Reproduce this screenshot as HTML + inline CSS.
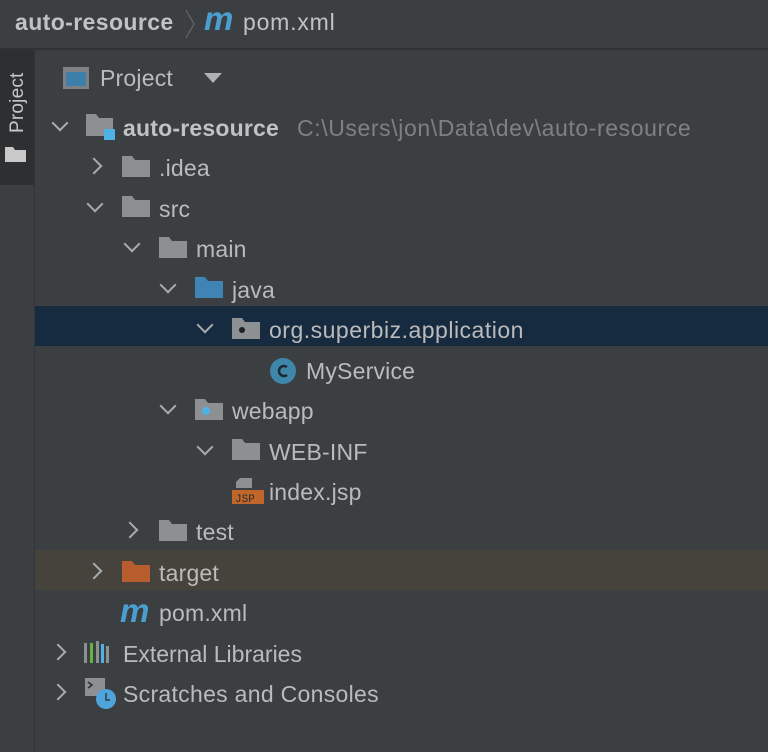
<!DOCTYPE html>
<html><head><meta charset="utf-8"><style>
body{margin:0;width:768px;height:752px;background:#3c3f41;font-family:"Liberation Sans",sans-serif;color:#bbbbbb;overflow:hidden;position:relative}
.top{position:absolute;left:0;top:0;width:768px;height:48px;background:#3c3f41;border-bottom:2px solid #2f3133}
.strip{position:absolute;left:0;top:50px;width:34px;height:702px;background:#3c3f41;border-right:1px solid #323436}
.tab{position:absolute;left:0;top:50px;width:34px;height:135px;background:#2d2f30}
.row{position:absolute;left:35px;width:733px;height:40px}
.t{position:absolute;font-size:23px;white-space:nowrap;line-height:26px;letter-spacing:0.2px}
.ch{position:absolute;width:10px;height:10px;border-right:2px solid #a9acae;border-bottom:2px solid #a9acae}
.dn{transform:rotate(45deg)}
.rt{transform:rotate(-45deg)}
.m{position:absolute;font-size:33px;font-style:italic;font-weight:bold;color:#4b9fd0;line-height:30px;letter-spacing:-1px}
svg{position:absolute}
</style></head><body>
<div class="top"></div>
<div class="t" style="left:15px;top:9px;font-weight:bold;color:#c2c2c2;letter-spacing:0.4px">auto-resource</div>
<svg style="left:183px;top:8px" width="14" height="32"><path d="M3 2 L11 16 L3 30" stroke="#5c5f61" stroke-width="1.5" fill="none"/></svg>
<div class="m" style="left:204px;top:4px">m</div>
<div class="t" style="left:243px;top:9px;color:#c2c2c2;letter-spacing:0.8px">pom.xml</div>
<div class="strip"></div><div class="tab"></div>
<div class="t" style="left:5px;top:133px;transform:rotate(-90deg);transform-origin:0 0;font-size:19px;color:#c8c8c8">Project</div>
<svg style="left:4px;top:145px" width="24" height="18"><path d="M1 2h8l2 3h11v12H1z" fill="#c9c9c9"/></svg>
<div class="row" style="top:306px;background:#172b40"></div>
<div class="row" style="top:550px;background:#45433c"></div>
<svg style="left:62px;top:66px" width="28" height="24"><rect x="1" y="1" width="26" height="22" fill="#7d8183"/><rect x="4" y="6" width="20" height="14" fill="#3d7eaa"/></svg>
<div class="t" style="left:100px;top:65px">Project</div>
<svg style="left:204px;top:73px" width="18" height="12"><path d="M0 0h18L9 10z" fill="#aeb1b3"/></svg>
<div class="ch dn" style="left:54px;top:117px"></div>
<div class="ch rt" style="left:88px;top:160px"></div>
<div class="ch dn" style="left:89px;top:198px"></div>
<div class="ch dn" style="left:126px;top:238px"></div>
<div class="ch dn" style="left:162px;top:279px"></div>
<div class="ch dn" style="left:199px;top:319px"></div>
<div class="ch dn" style="left:162px;top:400px"></div>
<div class="ch dn" style="left:199px;top:441px"></div>
<div class="ch rt" style="left:124px;top:524px"></div>
<div class="ch rt" style="left:88px;top:565px"></div>
<div class="ch rt" style="left:52px;top:646px"></div>
<div class="ch rt" style="left:52px;top:686px"></div>
<svg style="left:86px;top:114px" width="32" height="28"><path d="M0 0h10l3 4h14v18H0z" fill="#8c9092"/><rect x="18" y="15" width="11" height="11" fill="#4fb2e6"/></svg>
<svg style="left:122px;top:156px" width="30" height="22"><path d="M0 0h10l3 4h15v17H0z" fill="#8c9092"/></svg>
<svg style="left:122px;top:196px" width="30" height="22"><path d="M0 0h10l3 4h15v17H0z" fill="#8c9092"/></svg>
<svg style="left:159px;top:237px" width="30" height="22"><path d="M0 0h10l3 4h15v17H0z" fill="#8c9092"/></svg>
<svg style="left:195px;top:277px" width="30" height="22"><path d="M0 0h10l3 4h15v17H0z" fill="#4083b5"/></svg>
<svg style="left:232px;top:318px" width="30" height="22"><path d="M0 0h10l3 4h15v17H0z" fill="#8c9092"/><circle cx="10" cy="12" r="3" fill="#1e1f20"/></svg>
<svg style="left:195px;top:399px" width="30" height="22"><path d="M0 0h10l3 4h15v17H0z" fill="#8c9092"/><circle cx="11" cy="12" r="4" fill="#4fb2e6"/></svg>
<svg style="left:232px;top:439px" width="30" height="22"><path d="M0 0h10l3 4h15v17H0z" fill="#8c9092"/></svg>
<svg style="left:159px;top:520px" width="30" height="22"><path d="M0 0h10l3 4h15v17H0z" fill="#8c9092"/></svg>
<svg style="left:122px;top:561px" width="30" height="22"><path d="M0 0h10l3 4h15v17H0z" fill="#b85d2e"/></svg>
<svg style="left:269px;top:357px" width="28" height="28"><circle cx="14" cy="14" r="13" fill="#3f86ab"/><path d="M18 10a5 5 0 1 0 0 8" stroke="#1e2a33" stroke-width="2.5" fill="none"/></svg>
<svg style="left:232px;top:476px" width="32" height="30"><path d="M8 2h12v10H4V6z" fill="#8c9092"/><rect x="0" y="14" width="32" height="14" fill="#c0662a"/><text x="3" y="26" font-size="11" fill="#2b2b2b" font-family="Liberation Mono">JSP</text></svg>
<div class="m" style="left:120px;top:596px">m</div>
<svg style="left:84px;top:641px" width="26" height="24"><rect x="0" y="2" width="3" height="20" fill="#8c9092"/><rect x="6" y="2" width="3" height="20" fill="#62b543"/><rect x="12" y="0" width="3" height="22" fill="#8c9092"/><rect x="17" y="3" width="3" height="19" fill="#4fb2e6"/><rect x="22" y="5" width="3" height="17" fill="#8c9092"/></svg>
<svg style="left:84px;top:677px" width="36" height="34"><rect x="1" y="1" width="20" height="18" fill="#8c9092"/><path d="M4 5l4 3-4 3" stroke="#2d2f30" stroke-width="1.5" fill="none"/><circle cx="22" cy="22" r="10" fill="#4fa4dc"/><path d="M22 16v7h4" stroke="#2b3a44" stroke-width="1.5" fill="none"/></svg>
<div class="t" style="left:123px;top:115px;font-weight:bold;color:#c2c2c2">auto-resource</div>
<div class="t" style="left:297px;top:115px;color:#808080;letter-spacing:0.6px">C:\Users\jon\Data\dev\auto-resource</div>
<div class="t" style="left:159px;top:155px">.idea</div>
<div class="t" style="left:159px;top:196px">src</div>
<div class="t" style="left:196px;top:236px">main</div>
<div class="t" style="left:232px;top:277px">java</div>
<div class="t" style="left:269px;top:317px;letter-spacing:0.5px">org.superbiz.application</div>
<div class="t" style="left:306px;top:358px">MyService</div>
<div class="t" style="left:232px;top:398px">webapp</div>
<div class="t" style="left:269px;top:439px">WEB-INF</div>
<div class="t" style="left:269px;top:479px">index.jsp</div>
<div class="t" style="left:196px;top:519px">test</div>
<div class="t" style="left:159px;top:560px">target</div>
<div class="t" style="left:159px;top:600px">pom.xml</div>
<div class="t" style="left:123px;top:641px;letter-spacing:0">External Libraries</div>
<div class="t" style="left:123px;top:681px;letter-spacing:0.3px">Scratches and Consoles</div>
</body></html>
